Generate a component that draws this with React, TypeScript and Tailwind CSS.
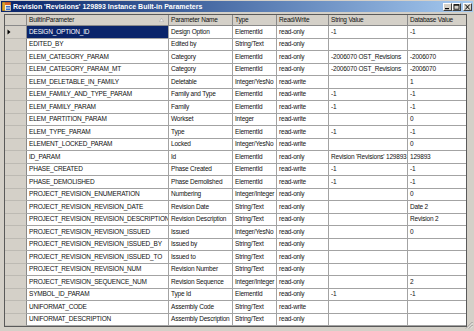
import React from "react";

type Row = {
  name: string;
  label: string;
  type: string;
  rw: string;
  str: string;
  db: string;
};

const rows: Row[] = [
  { name: "DESIGN_OPTION_ID", label: "Design Option", type: "ElementId", rw: "read-only", str: "-1", db: "-1" },
  { name: "EDITED_BY", label: "Edited by", type: "String/Text", rw: "read-only", str: "", db: "" },
  { name: "ELEM_CATEGORY_PARAM", label: "Category", type: "ElementId", rw: "read-only", str: "-2006070 OST_Revisions", db: "-2006070" },
  { name: "ELEM_CATEGORY_PARAM_MT", label: "Category", type: "ElementId", rw: "read-only", str: "-2006070 OST_Revisions", db: "-2006070" },
  { name: "ELEM_DELETABLE_IN_FAMILY", label: "Deletable", type: "Integer/YesNo", rw: "read-write", str: "", db: "1" },
  { name: "ELEM_FAMILY_AND_TYPE_PARAM", label: "Family and Type", type: "ElementId", rw: "read-write", str: "-1", db: "-1" },
  { name: "ELEM_FAMILY_PARAM", label: "Family", type: "ElementId", rw: "read-write", str: "-1", db: "-1" },
  { name: "ELEM_PARTITION_PARAM", label: "Workset", type: "Integer", rw: "read-write", str: "", db: "0" },
  { name: "ELEM_TYPE_PARAM", label: "Type", type: "ElementId", rw: "read-write", str: "-1", db: "-1" },
  { name: "ELEMENT_LOCKED_PARAM", label: "Locked", type: "Integer/YesNo", rw: "read-write", str: "", db: "0" },
  { name: "ID_PARAM", label: "Id", type: "ElementId", rw: "read-only", str: "Revision 'Revisions' 129893", db: "129893" },
  { name: "PHASE_CREATED", label: "Phase Created", type: "ElementId", rw: "read-write", str: "-1", db: "-1" },
  { name: "PHASE_DEMOLISHED", label: "Phase Demolished", type: "ElementId", rw: "read-write", str: "-1", db: "-1" },
  { name: "PROJECT_REVISION_ENUMERATION", label: "Numbering", type: "Integer/Integer", rw: "read-only", str: "", db: "0" },
  { name: "PROJECT_REVISION_REVISION_DATE", label: "Revision Date", type: "String/Text", rw: "read-only", str: "", db: "Date 2" },
  { name: "PROJECT_REVISION_REVISION_DESCRIPTION", label: "Revision Description", type: "String/Text", rw: "read-only", str: "", db: "Revision 2" },
  { name: "PROJECT_REVISION_REVISION_ISSUED", label: "Issued", type: "Integer/YesNo", rw: "read-only", str: "", db: "0" },
  { name: "PROJECT_REVISION_REVISION_ISSUED_BY", label: "Issued by", type: "String/Text", rw: "read-only", str: "", db: "" },
  { name: "PROJECT_REVISION_REVISION_ISSUED_TO", label: "Issued to", type: "String/Text", rw: "read-only", str: "", db: "" },
  { name: "PROJECT_REVISION_REVISION_NUM", label: "Revision Number", type: "String/Text", rw: "read-only", str: "", db: "" },
  { name: "PROJECT_REVISION_SEQUENCE_NUM", label: "Revision Sequence", type: "Integer/Integer", rw: "read-only", str: "", db: "2" },
  { name: "SYMBOL_ID_PARAM", label: "Type Id", type: "ElementId", rw: "read-only", str: "-1", db: "-1" },
  { name: "UNIFORMAT_CODE", label: "Assembly Code", type: "String/Text", rw: "read-write", str: "", db: "" },
  { name: "UNIFORMAT_DESCRIPTION", label: "Assembly Description", type: "String/Text", rw: "read-only", str: "", db: "" },
];

const cols = "grid grid-cols-[22px_142px_64px_44px_52px_79px_58px]";
const cell = "flex items-center pl-[2px] overflow-hidden whitespace-nowrap border-r border-b border-[#a3a3a3] bg-white";
const head = "flex items-center pl-[2px] border-r border-b border-[#8a8a8a] bg-[#d4d0c8]";

function WinButton({ kind }: { kind: "min" | "max" | "close" }) {
  return (
    <div className="w-[9px] h-[8px] bg-[#d4d0c8] border-t border-l border-white border-r border-b border-r-[#404040] border-b-[#404040] flex items-center justify-center">
      <svg width="7" height="6" viewBox="0 0 7 6">
        {kind === "min" && <rect x="1" y="4" width="4" height="1.2" fill="#000" />}
        {kind === "max" && (
          <g fill="none" stroke="#000" strokeWidth="0.8">
            <rect x="1" y="0.6" width="5" height="4.6" />
            <line x1="1" y1="1.3" x2="6" y2="1.3" />
          </g>
        )}
        {kind === "close" && (
          <g stroke="#000" strokeWidth="1">
            <line x1="1.2" y1="0.5" x2="5.8" y2="5.5" />
            <line x1="5.8" y1="0.5" x2="1.2" y2="5.5" />
          </g>
        )}
      </svg>
    </div>
  );
}

export default function App() {
  return (
    <div className="w-[474px] h-[331px] bg-[#d4d0c8] relative overflow-hidden font-['Liberation_Sans',Arial,sans-serif] text-[#111]">
      {/* title bar */}
      <div className="mx-px mt-px h-[11px] flex items-center bg-gradient-to-r from-[#0a246a] to-[#a6caf0] pl-[1px] pr-[1px]">
        <svg width="9" height="9" viewBox="0 0 9 9" className="mr-[2px] shrink-0">
          <rect x="0" y="0" width="9" height="9" fill="#f3f0e6" />
          <rect x="0" y="0" width="9" height="3" fill="#e0662a" />
          <rect x="0" y="0" width="3" height="9" fill="#d9a32b" />
          <rect x="4" y="4" width="4" height="1.5" fill="#3d6fc9" />
          <rect x="4" y="6.5" width="4" height="1.5" fill="#3d6fc9" />
          <rect x="0" y="0" width="9" height="9" fill="none" stroke="#5a4a2a" strokeWidth="0.6" />
        </svg>
        <span className="text-white font-bold text-[7px] leading-none whitespace-nowrap">
          Revision 'Revisions' 129893 Instance Built-in Parameters
        </span>
        <div className="flex-1" />
        <div className="flex items-center">
          <WinButton kind="min" />
          <WinButton kind="max" />
          <div className="w-[2px]" />
          <WinButton kind="close" />
        </div>
      </div>

      {/* grid */}
      <div className="ml-[4px] mt-[2px] w-[463px] border border-[#5a5a5a] bg-[#d4d0c8] text-[6.5px] leading-none tracking-[-0.2px]">
        <div className={`${cols} h-[11px]`}>
          <div className="border-r border-b border-[#8a8a8a] bg-[#d4d0c8]" />
          <div className={`${head} justify-between pr-[4px]`}>
            <span>BuiltInParameter</span>
            <svg width="5" height="4" viewBox="0 0 5 4">
              <path d="M2.5 0.3 L4.7 3.7 L0.3 3.7 Z" fill="#eeeeee" stroke="#a8a8a8" strokeWidth="0.6" />
            </svg>
          </div>
          <div className={head}>Parameter Name</div>
          <div className={head}>Type</div>
          <div className={head}>Read/Write</div>
          <div className={head}>String Value</div>
          <div className={`${head} border-r-0`}>Database Value</div>
        </div>

        {rows.map((r, i) => (
          <div key={r.name} className={`${cols} h-[12.5px]`}>
            <div className="flex items-center pl-[2px] border-r border-b border-[#8a8a8a] border-b-[#bdbab3] bg-[#d4d0c8]">
              {i === 0 && (
                <svg width="4" height="6" viewBox="0 0 4 6">
                  <path d="M0.5 0.5 L3.5 3 L0.5 5.5 Z" fill="#000" />
                </svg>
              )}
            </div>
            <div className={`${cell} ${i === 0 ? "!bg-[#0a246a] text-white" : ""}`}>{r.name}</div>
            <div className={cell}>{r.label}</div>
            <div className={cell}>{r.type}</div>
            <div className={cell}>{r.rw}</div>
            <div className={cell}>{r.str}</div>
            <div className={`${cell} border-r-0`}>{r.db}</div>
          </div>
        ))}
      </div>

      {/* size grip */}
      <svg width="8" height="8" viewBox="0 0 8 8" className="absolute right-[1px] bottom-[2px]">
        <g stroke="#808080" strokeWidth="0.8">
          <line x1="7.5" y1="1" x2="1" y2="7.5" />
          <line x1="7.5" y1="4" x2="4" y2="7.5" />
        </g>
        <g stroke="#ffffff" strokeWidth="0.6">
          <line x1="7.5" y1="2" x2="2" y2="7.5" />
          <line x1="7.5" y1="5" x2="5" y2="7.5" />
        </g>
      </svg>
    </div>
  );
}
